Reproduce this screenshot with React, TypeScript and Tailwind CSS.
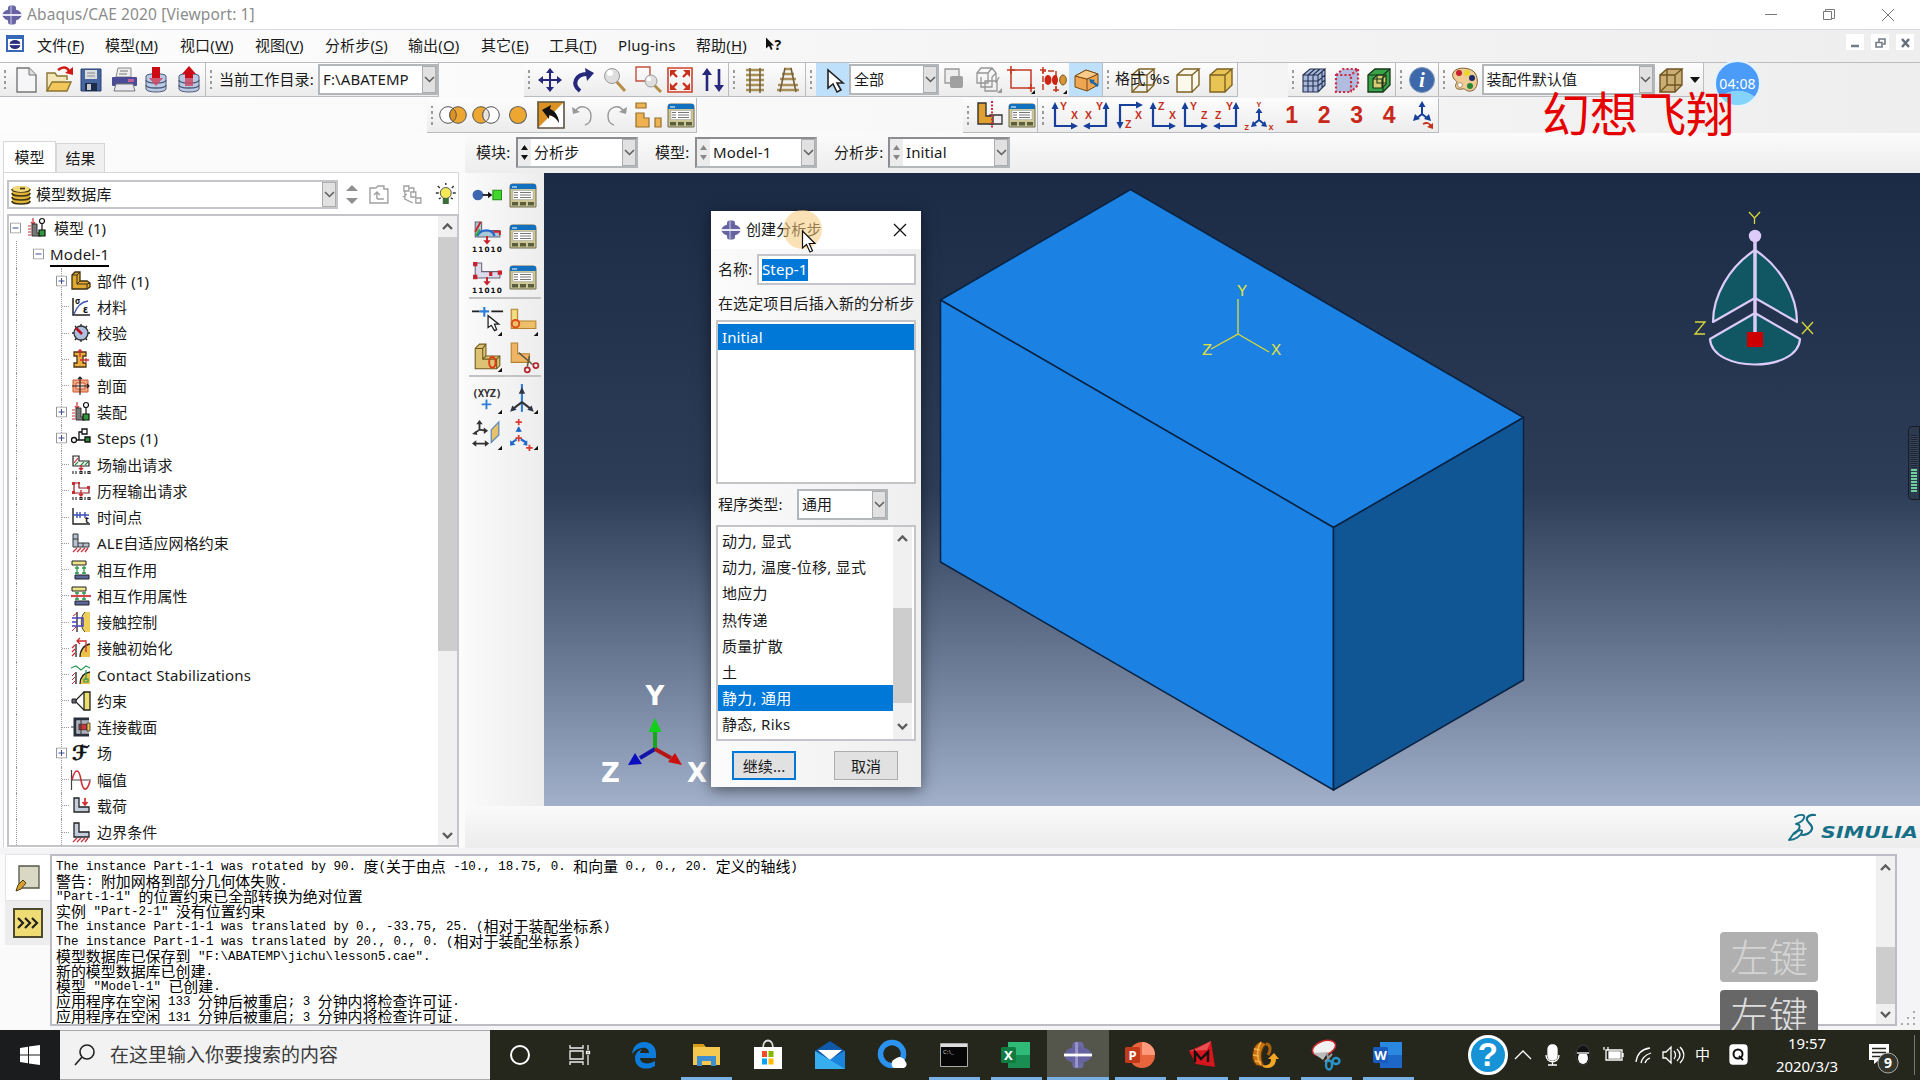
import type { ReactNode } from "react";
import clsx from "clsx";

/* ---------- small building blocks ---------- */

function Svg({ children, s = 28 }: { children: ReactNode; s?: number }) {
  return (
    <svg width={s} height={s} viewBox="0 0 28 28" fill="none" className="shrink-0 overflow-visible">
      {children}
    </svg>
  );
}

function Svg20({ children }: { children: ReactNode }) {
  return (
    <svg width="20" height="20" viewBox="0 0 20 20" fill="none" className="shrink-0 overflow-visible">
      {children}
    </svg>
  );
}

function Grip() {
  return (
    <div className="flex w-[10px] shrink-0 flex-col items-center gap-[3px]">
      {[0, 1, 2, 3].map((i) => (
        <i key={i} className="block h-[2.5px] w-[2.5px] bg-[#9a9a9a]" />
      ))}
    </div>
  );
}

function Cell({ children, on, className = "w-[32.5px]" }: { children?: ReactNode; on?: boolean; className?: string }) {
  return (
    <div className={clsx("relative flex h-full shrink-0 items-center justify-center", className, on && "bg-[#bfe0fa]")}>
      {children}
    </div>
  );
}

function Group({ children, className }: { children: ReactNode; className: string }) {
  return (
    <div
      className={clsx(
        "relative flex h-full shrink-0 items-center border-r border-b border-[#b9bcc0] bg-linear-to-b from-[#fdfdfd] to-[#ececec]",
        className
      )}
    >
      {children}
    </div>
  );
}

function Chevron({ up, bold }: { up?: boolean; bold?: boolean }) {
  return (
    <svg width="11" height="7" viewBox="0 0 11 7" fill="none">
      <path d={up ? "M1 6L5.5 1.5L10 6" : "M1 1L5.5 5.5L10 1"} stroke="#5c5c5c" strokeWidth={bold ? 2.4 : 1.5} />
    </svg>
  );
}

function Combo({ text, className, spin, dim }: { text: string; className: string; spin?: boolean; dim?: boolean }) {
  return (
    <div className={clsx("flex shrink-0 items-center border-2 border-[#b4b7ba] bg-white", className, spin && "border-t-[#8b8d90] border-l-[#8b8d90]")}>
      {spin && (
        <div className="flex h-full w-[13px] flex-col items-center justify-center gap-[5px] bg-[#ececec]">
          <svg width="7" height="5"><path d="M3.5 0L7 5H0Z" fill={dim ? "#888" : "#111"} /></svg>
          <svg width="7" height="5"><path d="M3.5 5L7 0H0Z" fill={dim ? "#888" : "#111"} /></svg>
        </div>
      )}
      <span className="-mt-[2px] flex-1 pl-[3px] leading-[22px] whitespace-nowrap">{text}</span>
      <div className="flex h-full w-[14px] items-center justify-center border border-[#adadad] bg-[#e1e1e1]">
        <Chevron />
      </div>
    </div>
  );
}

function AbaqusLogo({ s = 20, light }: { s?: number; light?: boolean }) {
  return (
    <svg width={s} height={s} viewBox="0 0 20 20" className="shrink-0">
      <rect x="6" y="0.5" width="8" height="19" rx="2.5" fill="#6c68a4" />
      <ellipse cx="10" cy="10" rx="9.6" ry="6" fill="#6763a0" />
      <rect x="8" y="1" width="2" height="18" fill="#9b98c8" />
      <rect x="0" y="9" width="20" height="2" fill={light ? "#fff" : "#e9e9f6"} />
    </svg>
  );
}

/* ---------- toolbar icons ---------- */

const DISK = "M4 10c0-3 20-3 20 0v13c0 4-20 4-20 0z";

const NewIcon = () => (
  <Svg>
    <path d="M5 2h12l7 7v17H5z" fill="#f6f6f8" stroke="#777" strokeWidth="1.4" />
    <path d="M17 2v7h7" fill="#ddd" stroke="#777" />
  </Svg>
);
const OpenIcon = () => (
  <Svg>
    <path d="M2 25V7h8l2 3h10v4" fill="#f3e7b8" stroke="#8a7431" strokeWidth="1.4" />
    <path d="M2 25l5-9h19l-4 9z" fill="#f3c659" stroke="#8a7431" strokeWidth="1.4" />
    <path d="M13 4c5-4 9-3 11 1" stroke="#d01c14" strokeWidth="2.6" />
    <path d="M28 1v8l-8-2z" fill="#d01c14" />
  </Svg>
);
const SaveIcon = () => (
  <Svg>
    <path d="M4 3h20v22H4z" fill="#46659f" stroke="#2b4273" />
    <path d="M8 4h12v9H8z" fill="#d9dde0" />
    <path d="M10 7h8M10 10h8" stroke="#888" />
    <path d="M8 17h12v8H8z" fill="#1d2c4a" />
    <path d="M10 18h4v6h-4z" fill="#c6cad0" />
  </Svg>
);
const PrintIcon = () => (
  <Svg>
    <path d="M8 2h13v9H6z" fill="#efefef" stroke="#888" />
    <path d="M10 5h8M9 8h8" stroke="#777" />
    <rect x="2" y="11" width="25" height="9" rx="1" fill="#4b4a96" />
    <path d="M18 13h6v3h-6z" fill="#c25e9a" />
    <path d="M6 18h17l2 7H4z" fill="#e8e8ee" stroke="#777" />
  </Svg>
);
const DbIcon = ({ up }: { up?: boolean }) => (
  <Svg>
    <path d={DISK} fill="#b9c8e4" stroke="#4d5a75" />
    <path d="M4 14c0 4 20 4 20 0M4 19c0 4 20 4 20 0" stroke="#4d5a75" strokeWidth="1.4" />
    {up ? <path d="M14 0l7 8h-3v4h-8V8H7z" fill="#cc0b14" /> : <path d="M10 1h8v11h-8z" fill="#cc0b14" />}
    {up ? <path d="M10 12h8v8h-8z" fill="#cf4a66" opacity=".85" /> : <path d="M7 12h14l-7 8z" fill="#cf4a66" opacity=".9" />}
  </Svg>
);
const PanIcon = () => (
  <Svg>
    <path d="M14 4v20M4 14h20" stroke="#27277c" strokeWidth="2" />
    <path d="M14 2l4 5h-8zM14 26l4-5h-8zM2 14l5-4v8zM26 14l-5-4v8z" fill="#27277c" />
  </Svg>
);
const RotateIcon = () => (
  <Svg>
    <path d="M11 25C2 18 7 8 18 8" stroke="#27277c" strokeWidth="4" />
    <path d="M16 2l9 5-7 8z" fill="#27277c" />
  </Svg>
);
const ZoomIcon = () => (
  <Svg>
    <path d="M15 15l9 10" stroke="#b58d45" strokeWidth="3" />
    <circle cx="11" cy="10" r="7.5" fill="#dedede" stroke="#9a9a9a" />
    <circle cx="9" cy="7" r="3" fill="#fff" />
  </Svg>
);
const BoxZoomIcon = () => (
  <Svg>
    <path d="M2 1h14v14H2z" stroke="#c4503f" strokeWidth="1.4" />
    <path d="M20 19l7 7" stroke="#b58d45" strokeWidth="3" />
    <circle cx="17" cy="15" r="6" fill="#dedede" stroke="#9a9a9a" />
    <circle cx="15" cy="13" r="2.3" fill="#fff" />
  </Svg>
);
const FitIcon = () => (
  <Svg>
    <path d="M2 2h24v24H2z" stroke="#d2402c" strokeWidth="1.6" />
    <path d="M6 6l5 5M22 6l-5 5M6 22l5-5M22 22l-5-5" stroke="#c8301c" strokeWidth="2.4" />
    <path d="M4 4h7l-7 7zM24 4h-7l7 7zM4 24h7l-7-7zM24 24h-7l7-7z" fill="#c8301c" />
  </Svg>
);
const SwapIcon = () => (
  <Svg>
    <path d="M8 6v19M20 3v19" stroke="#27277c" strokeWidth="2.6" />
    <path d="M8 2l5 7H3zM20 26l5-7H15z" fill="#27277c" />
  </Svg>
);
const RailIcon = ({ persp }: { persp?: boolean }) => (
  <Svg>
    <path
      d={persp ? "M10 3h8M8 8h12M6 13h16M4 19h20M3 24h22" : "M5 4h18M5 9h18M5 14h18M5 19h18M5 24h18"}
      stroke="#a89058"
      strokeWidth="2.4"
    />
    <path d={persp ? "M11 2L6 26M17 2l5 24" : "M9 2v25M19 2v25"} stroke="#75603a" strokeWidth="1.6" />
  </Svg>
);
const CursorIcon = () => (
  <Svg>
    <path d="M9 4v18l5-4 4 8 4-2-4-7h6z" fill="#fff" stroke="#222" strokeWidth="1.6" />
  </Svg>
);
const CubeWire = ({ stroke, fill = "none", solid }: { stroke: string; fill?: string; solid?: boolean }) => (
  <Svg>
    <path d="M3 9l7-6h15v16l-7 7H3z" fill={fill} />
    <path d="M3 9h15v17H3zM3 9l7-6h15l-7 6M25 3v16l-7 7" stroke={stroke} strokeWidth="1.4" />
    {!solid && <path d="M10 3v16h15M10 19l-7 7" stroke={stroke} strokeWidth="1.4" />}
  </Svg>
);
const GridCube = () => (
  <Svg>
    <path d="M3 9l7-6h15v16l-7 7H3z" fill="#a9b9de" />
    <path d="M3 9h15v17H3zM3 9l7-6h15l-7 6M25 3v16l-7 7M8 9v17M13 9v17M3 15h15l7-6M3 20h15l7-6M8 9l7-6M13 9l7-6M22 5v17" stroke="#26314f" strokeWidth="1.1" />
  </Svg>
);
const DotCube = () => (
  <Svg>
    <path d="M3 9l7-6h15v16l-7 7H3z" fill="#b0bde0" />
    <path d="M3 9h15v17H3zM3 9l7-6h15l-7 6M25 3v16l-7 7" stroke="#cc2f45" strokeWidth="2.2" strokeDasharray="2.2 2" />
  </Svg>
);
const GreenCube = () => (
  <Svg>
    <path d="M3 9l7-6h15v16l-7 7H3z" fill="#39a447" stroke="#17361c" strokeWidth="1.3" />
    <path d="M8 13l4-4h9v9l-4 4H8z" fill="#d7cc70" stroke="#17361c" strokeWidth="1.2" />
    <path d="M8 13h9v9M17 13l4-4M12 9v8h9M3 9h15v17M18 9l7-6" stroke="#17361c" strokeWidth="1.1" />
  </Svg>
);
const OrangeBox = () => (
  <Svg>
    <path d="M3 10l11-6 12 4v11l-11 6-12-4z" fill="#f0a552" stroke="#7b4b12" />
    <path d="M3 10l12 3 11-5M15 13v12" stroke="#7b4b12" />
    <path d="M3 10l11-6 12 4-11 5z" fill="#f9cb8a" stroke="#7b4b12" />
    <path d="M26 20l-7-5" stroke="#1568a8" strokeWidth="2.2" />
    <path d="M17 13l6 1-4 4z" fill="#1568a8" />
  </Svg>
);
const GreyCubes = () => (
  <Svg>
    <path d="M2 7l4-5h11l4 5v10M2 7h11v10H2zM13 7l4-5M6 11v10h11V11M17 11l4-4M10 15v10h12V15zM22 15l2-4" stroke="#969696" strokeWidth="1.3" />
    <path d="M27 27v-5l-5 5z" fill="#999" />
  </Svg>
);
const Corner = ({ c = "#111" }: { c?: string }) => <path d="M28 28v-4l-4 4z" fill={c} />;
const RectSel = () => (
  <Svg>
    <path d="M4 4h20v18H4z" stroke="#c43a24" strokeWidth="1.5" />
    <path d="M0 4h8M4 0v8M21 22h7M24 18v8" stroke="#c43a24" strokeWidth="1.6" />
    <Corner />
  </Svg>
);
const DotsSel = () => (
  <Svg>
    <path d="M4 24V5h13v20" stroke="#c43a24" strokeWidth="1.5" strokeDasharray="6 2" />
    <path d="M1 4h6M4 1v6M14 24h6M17 20v6" stroke="#c43a24" strokeWidth="1.5" />
    <ellipse cx="9" cy="14" rx="3.5" ry="5" fill="#cc2414" />
    <ellipse cx="16" cy="14" rx="3" ry="5" fill="#cc2414" />
    <ellipse cx="24" cy="14" rx="3.3" ry="5" fill="#d79634" stroke="#77531b" />
    <Corner />
  </Svg>
);
const GreySq = () => (
  <Svg>
    <path d="M5 3h14v14H5z" fill="#eee" stroke="#999" strokeWidth="1.3" />
    <rect x="10" y="10" width="13" height="12" rx="2" fill="#a0a0a0" />
  </Svg>
);
const InfoIcon = () => (
  <Svg>
    <circle cx="14" cy="14" r="12.5" fill="#3d68a9" stroke="#8197bb" />
    <text x="14" y="21" textAnchor="middle" fontSize="21" fontStyle="italic" fontWeight="700" fontFamily="Liberation Serif, serif" fill="#fff">i</text>
  </Svg>
);
const PaletteIcon = () => (
  <Svg>
    <path d="M2 7C5 0 20 1 24 7s3 17-4 18c-5 1-5-3-9-2s-8-1-6-5c2-3 0-3-2-5-1-1-2-4-1-6z" fill="#f0cb94" stroke="#7d6337" />
    <circle cx="8" cy="7" r="3" fill="#c8202c" />
    <circle cx="16" cy="7" r="3" fill="#e9d829" />
    <circle cx="21" cy="12" r="3" fill="#1c2a6c" />
    <circle cx="19" cy="20" r="3" fill="#278437" />
    <circle cx="9" cy="19" r="2.4" fill="#fff" stroke="#7d6337" strokeWidth=".6" />
  </Svg>
);
const Venn = ({ kind }: { kind: "right" | "left" | "one" }) => (
  <Svg>
    {kind === "one" ? (
      <circle cx="14" cy="14" r="8.5" fill="#eda62f" stroke="#666" strokeWidth="1.1" />
    ) : (
      <>
        <circle cx="9" cy="14" r="8.3" fill={kind === "left" ? "#eda62f" : "#fff"} stroke="#555" />
        <circle cx="19" cy="14" r="8.3" fill={kind === "left" ? "#fff" : "#eda62f"} stroke="#555" />
        <path d="M14 7.4a8.3 8.3 0 0 1 0 13.2a8.3 8.3 0 0 1 0-13.2z" fill={kind === "left" ? "#e9e4da" : "#dd9322"} stroke="#555" />
      </>
    )}
  </Svg>
);
const InvertIcon = () => (
  <Svg>
    <path d="M1 1h26v26H1z" fill="#fff" />
    <path d="M1 1h26L1 27z" fill="#dc9222" />
    <path d="M1 1h26v26H1z" stroke="#5b5341" strokeWidth="1.6" />
    <path d="M5 9l9-5-1 4c6 2 9 9 9 14-3-5-6-7-10-8v4z" fill="#111" />
  </Svg>
);
const UndoIcon = ({ flip }: { flip?: boolean }) => (
  <Svg>
    <g transform={flip ? "translate(28 0) scale(-1 1)" : undefined}>
      <path d="M7 9C12 3 22 6 22 15c0 4-2 8-6 9" stroke="#999" strokeWidth="1.4" />
      <path d="M3 6l1 7 7-2z" fill="#999" />
    </g>
  </Svg>
);
const PartsIcon = () => (
  <Svg>
    <path d="M2 2h10v5H2zM2 12h8v5h5v9H2zM21 17h6v9h-6z" fill="#efb252" stroke="#95712e" strokeWidth="1.2" />
  </Svg>
);
const ManagerIcon = () => (
  <Svg>
    <path d="M1 6c0-2 1-3 3-3h20c2 0 3 1 3 3v20H1z" fill="#cdc797" stroke="#6e6a4b" />
    <path d="M1 8V5c0-2 1-2 3-2h20c2 0 3 0 3 2v3z" fill="#1270bf" />
    <path d="M3 6h5" stroke="#fff" />
    <path d="M4 9.500h20v9H4z" fill="#fff" stroke="#999" strokeWidth=".5" />
    <path d="M5 11.500h4M11 11.500h11M5 14h4M11 14h11M5 16.500h4M11 16.500h11" stroke="#777" strokeWidth="1" />
    <path d="M3 21h6v3.500H3zM11 21h6v3.500h-6zM19 21h6v3.500h-6z" fill="#5b5d3f" />
  </Svg>
);
const SectionIcon = () => (
  <Svg>
    <path d="M15 14h12v9H15z" fill="#eee" stroke="#333" strokeWidth="1.3" />
    <path d="M3 2h8v13h7v8H3z" fill="#e0a030" stroke="#333" strokeWidth="1.4" />
    <path d="M17 0v28" stroke="#d22b40" strokeWidth="2" strokeDasharray="2 1.5" />
  </Svg>
);
const AxisText = ({ x, y, t }: { x: number; y: number; t: string }) => (
  <text x={x} y={y} fontSize="10.500" fontWeight="700" fontFamily="Liberation Sans, sans-serif" fill="#c5301c">{t}</text>
);
// corner 0 = bottom-left, 1 = bottom-right, 2 = top-left
const AxisIcon = ({ corner, v, h }: { corner: 0 | 1 | 2; v: string; h: string }) => (
  <Svg>
    {corner === 0 && (
      <>
        <path d="M5 6v19h17" stroke="#16409c" strokeWidth="2.2" />
        <path d="M5 1l3.500 7h-7zM28 25l-7-3.500v7z" fill="#16409c" />
        <AxisText x={10} y={9} t={v} />
        <AxisText x={21} y={18} t={h} />
      </>
    )}
    {corner === 1 && (
      <>
        <path d="M23 6v19H6" stroke="#16409c" strokeWidth="2.2" />
        <path d="M23 1l3.500 7h-7zM0 25l7-3.500v7z" fill="#16409c" />
        <AxisText x={13} y={9} t={v} />
        <AxisText x={2} y={18} t={h} />
      </>
    )}
    {corner === 2 && (
      <>
        <path d="M22 4H5v17" stroke="#16409c" strokeWidth="2.2" />
        <path d="M28 4l-7-3.500v7zM5 28l3.500-7h-7z" fill="#16409c" />
        <AxisText x={10} y={27} t={v} />
        <AxisText x={20} y={18} t={h} />
      </>
    )}
  </Svg>
);
const IsoIcon = () => (
  <Svg>
    <path d="M14 11v8l-5 4M14 19l5 4" stroke="#16409c" strokeWidth="2" />
    <path d="M14 7l3.500 5h-7zM6 26l2-6 4 5zM22 26l-2-6-4 5z" fill="#16409c" />
    <text x="11.500" y="5.500" fontSize="7.500" fontWeight="700" fill="#c5301c">Y</text>
    <text x="-0.500" y="28.500" fontSize="7.500" fontWeight="700" fill="#c5301c">Z</text>
    <text x="23.500" y="28.500" fontSize="7.500" fontWeight="700" fill="#c5301c">X</text>
  </Svg>
);
const IsoRotIcon = () => (
  <Svg>
    <path d="M14 4v9l-5 4M14 13l5 4" stroke="#16409c" strokeWidth="2" />
    <path d="M14 0l3.500 6h-7zM5 20l2-7 5 5zM23 20l-2-7-5 5z" fill="#16409c" />
    <path d="M15 23c4-2 7-1 8 3" stroke="#c5301c" strokeWidth="1.8" />
    <path d="M25 22v6l-6-2z" fill="#c5301c" />
  </Svg>
);

/* ---------- module toolbox icons ---------- */

const StepCreate = () => (
  <Svg s={30}>
    <circle cx="5.500" cy="14" r="5" fill="#3d66b0" />
    <path d="M10 14h7" stroke="#111" strokeWidth="1.6" />
    <path d="M19 14l-4-3v6z" fill="#111" />
    <path d="M19.500 9.500h8v9h-8z" fill="#3fd82b" stroke="#278b1c" />
  </Svg>
);
const OutputIcon = ({ hist }: { hist?: boolean }) => (
  <Svg s={30}>
    <path d="M3 1h6v8h17v6H3z" fill={hist ? "#dcdcec" : "#a9c8d8"} stroke="#667" />
    {hist ? (
      <path d="M1 0h4v4H1zM1 12h4v4H1zM24 8h4v4h-4zM16 9h3v4h-3z" fill="#c8202c" />
    ) : (
      <>
        <path d="M5 14c3-7 14-7 16 0" stroke="#2868d0" strokeWidth="2.200" />
        <path d="M3 10l5-9M20 10h6v3" stroke="#d0262a" strokeWidth="1.8" />
        <path d="M4 14l3-6" stroke="#26a54a" strokeWidth="2" />
      </>
    )}
    <path d="M14 14v6" stroke="#c8202c" strokeWidth="1.8" />
    <path d="M14 22l3.500-4h-7z" fill="#c8202c" />
    <text x="0" y="28.500" fontSize="6.800" fontWeight="700" textLength="28" fontFamily="DejaVu Sans, sans-serif" fill="#111">11010</text>
  </Svg>
);
const PickIcon = () => (
  <Svg s={30}>
    <path d="M0 5h7M18 5h11" stroke="#222" strokeWidth="1.6" />
    <path d="M7 5h9M11.500 1v9" stroke="#2f7fd8" strokeWidth="2" />
    <path d="M15 9v11l3-2 3 5 2-1-2-5h4z" fill="#fff" stroke="#222" strokeWidth="1.2" />
    <Corner />
  </Svg>
);
const LPart = () => (
  <Svg s={30}>
    <path d="M3 3h6v11h17v7H3z" fill="#ecc06a" stroke="#b7822e" />
    <path d="M4 4h4v9H4z" fill="#f0df85" />
    <circle cx="7" cy="16.500" r="3.500" stroke="#dd4d16" strokeWidth="1.8" />
    <Corner />
  </Svg>
);
const SolidL = () => (
  <Svg s={30}>
    <path d="M3 6l4-4h6v11h13v9l-3 3H3z" fill="#dcc274" stroke="#6f5a1c" />
    <path d="M3 6h7v10h13v9M10 6l3-4M10 16l3-3M23 16l3-3" stroke="#6f5a1c" />
    <ellipse cx="19" cy="19" rx="3" ry="5" stroke="#dd3a16" strokeWidth="1.8" />
    <Corner />
  </Svg>
);
const CutIcon = () => (
  <Svg s={30}>
    <path d="M3 1h6v10h11v8H3z" fill="#edb565" stroke="#b7822e" />
    <path d="M10 10l13 11M20 13l-2 10" stroke="#665a40" strokeWidth="1.5" />
    <circle cx="18" cy="26" r="2.400" stroke="#b3232b" strokeWidth="1.6" />
    <circle cx="26" cy="22" r="2.400" stroke="#b3232b" strokeWidth="1.6" />
  </Svg>
);
const XyzIcon = () => (
  <Svg s={30}>
    <text x="0" y="12" fontSize="10" fontWeight="700" textLength="28" fontFamily="DejaVu Sans Mono, monospace" fill="#333">(XYZ)</text>
    <path d="M9 19h9M13.500 14.500v9" stroke="#2f7fd8" strokeWidth="1.8" />
    <Corner />
  </Svg>
);
const CsysIcon = () => (
  <Svg s={30}>
    <path d="M13 0v26" stroke="#2f7fd8" strokeWidth="2" />
    <path d="M13 17l-8 6M13 17l8 6" stroke="#333" strokeWidth="2" />
    <path d="M13 3l3 6h-6zM2 26l2-6 4 4zM24 26l-2-6-4 4z" fill="#2c3644" />
    <Corner />
  </Svg>
);
const PlaneIcon = () => (
  <Svg s={30}>
    <path d="M7 2v7l-4 3M7 9l6 1M2 22h12" stroke="#333" strokeWidth="1.7" />
    <path d="M7 0l3 4H4zM0 22l4-3v6zM16 22l-4-3v6zM0 13l4-3 1 4zM15 10l-4 3v-6z" fill="#333" />
    <path d="M18 9l7-7v12l-7 7z" fill="#eac069" stroke="#5b8db8" strokeWidth="1.200" />
    <Corner />
  </Svg>
);
const DatumIcon = () => (
  <Svg s={30}>
    <path d="M7 2h6M10 -1v6M7 17h6M10 14v6M17 26h6M20 23v6" stroke="#dc3a2c" strokeWidth="1.6" />
    <path d="M10 7v4M8 18l-4 3M12 18l5 3" stroke="#1d68c8" strokeWidth="2" />
    <path d="M10 6l3 5H7zM2 24v-5l5 4zM18 24v-5l-4 4z" fill="#1d68c8" />
    <Corner />
  </Svg>
);

/* ---------- tree icons ---------- */

const Hatch = ({ y = 15 }: { y?: number }) => (
  <path d={`M2 ${y + 5}l4-4M6 ${y + 5}l4-4M10 ${y + 5}l4-4M14 ${y + 5}l3-4`} stroke="#c8303c" strokeWidth="1.300" />
);

const treeIcons: Record<string, ReactNode> = {
  model: (
    <Svg20>
      <path d="M6 0v7M4 4l2 3 2-3M1 8h3M1 11h3M1 14h3M1 17h3" stroke="#cf2a30" strokeWidth="1.2" />
      <path d="M5 6h5v9h4v3H5z" fill="#777" stroke="#333" />
      <circle cx="15" cy="3" r="2.500" fill="#fff" stroke="#111" strokeWidth="1.200" />
      <path d="M15 6v6M12 12h6v6h-6z" fill="#2f9a3a" stroke="#111" strokeWidth="1.200" />
    </Svg20>
  ),
  part: (
    <Svg20>
      <path d="M1 4l3-3h5v9h7l3 2v4l-3 2H1z" fill="#e0a934" stroke="#3d3010" strokeWidth="1.3" />
      <path d="M1 4h5v9h10v5M6 4l3-3M6 13l3-3M16 13l3-1" stroke="#3d3010" strokeWidth="1" />
    </Svg20>
  ),
  material: (
    <Svg20>
      <path d="M2 1v17h17" stroke="#222" strokeWidth="1.500" />
      <path d="M3 17C6 9 10 5 17 4" stroke="#3a52b4" strokeWidth="1.3" />
      <text x="4" y="7" fontSize="8" fontWeight="700" fill="#111">σ</text>
      <text x="12" y="16" fontSize="10" fontWeight="700" fill="#111">ε</text>
    </Svg20>
  ),
  calibration: (
    <Svg20>
      <path d="M10 1v18M1 10h18M4 3l12 14M16 3L4 17" stroke="#222" strokeWidth="1.3" />
      <circle cx="10" cy="10" r="7" fill="#aebfe0" stroke="#333" strokeWidth="1.3" />
      <path d="M5 5l6 6" stroke="#b8101c" strokeWidth="2.6" />
    </Svg20>
  ),
  section: (
    <Svg20>
      <path d="M3 3h12v4h-3v7h3v4H3v-4h3V7H3z" fill="#efae42" stroke="#4e3610" strokeWidth="1.3" />
      <path d="M9 0v8M9 11h9M7 2h4M15 9v4" stroke="#cf2a30" strokeWidth="1.300" />
    </Svg20>
  ),
  profile: (
    <Svg20>
      <path d="M2 4h15v12H2z" fill="#f3a884" stroke="#d0542c" />
      <path d="M5 7h9v6H5z" fill="#f9d6c4" stroke="#d0542c" />
      <path d="M9 1v18M1 10h17M7 3l2-2 2 2M16 8l2 2-2 2" stroke="#222" strokeWidth="1.200" />
    </Svg20>
  ),
  steps: (
    <Svg20>
      <circle cx="3" cy="12" r="2.500" stroke="#111" strokeWidth="1.300" />
      <path d="M6 12h8M8 12V4h3M11 1h5v5h-5z" stroke="#111" strokeWidth="1.300" />
      <path d="M14 9h5v5h-5z" fill="#2f8a3a" stroke="#111" strokeWidth="1.300" />
    </Svg20>
  ),
  field: (
    <Svg20>
      <path d="M2 1h6v5h10v5H2z" fill="#f7f7f7" stroke="#222" strokeWidth="1.200" />
      <path d="M3 8l4-5" stroke="#cf2a30" strokeWidth="1.200" />
      <path d="M4 10l3-3M10 10l3-3M14 10l3-3" stroke="#2a9440" strokeWidth="1.200" />
      <path d="M10 10v5M8 13l2 2 2-2" stroke="#cf2a30" strokeWidth="1.400" />
      <path d="M2 16v3M5 16v3M9 16.500h2v2H9zM14 16v3M17 16.500h2v2h-2z" stroke="#222" strokeWidth="1.100" />
    </Svg20>
  ),
  history: (
    <Svg20>
      <path d="M3 2h5v5h10v5H3z" fill="#f7f7f7" stroke="#8a1d24" strokeWidth="1.200" />
      <path d="M1 1h3v3H1zM1 10h3v3H1zM16 5h3v3h-3zM7 1h2v2H7z" fill="#cf2a30" />
      <path d="M10 9v6M8 13l2 2 2-2" stroke="#cf2a30" strokeWidth="1.400" />
      <path d="M2 16v3M5 16v3M9 16.500h2v2H9zM14 16v3M17 16.500h2v2h-2z" stroke="#222" strokeWidth="1.100" />
    </Svg20>
  ),
  time: (
    <Svg20>
      <path d="M2 1v16h17" stroke="#222" strokeWidth="1.400" />
      <path d="M2 8h16M6 5v6M9 5v6M14 5v6" stroke="#3a4fb4" strokeWidth="1.400" />
      <text x="14" y="16" fontSize="9" fontWeight="700" fill="#111">t</text>
    </Svg20>
  ),
  ale: (
    <Svg20>
      <path d="M2 1h5v9h11v4H2zM2 6h5M7 10v4M12 10v4" fill="#b5c2cf" stroke="#333" />
      <Hatch y={14} />
    </Svg20>
  ),
  inter: (
    <Svg20>
      <path d="M1 1h14v4H1z" fill="#efe387" stroke="#222" />
      <path d="M6 6v8M13 6v8M4 8h4M11 8h4M4 13h4M11 13h4" stroke="#2a9a48" strokeWidth="1.300" />
      <path d="M4 15h14v4H4z" fill="#5a679a" stroke="#222" />
    </Svg20>
  ),
  interProp: (
    <Svg20>
      <path d="M1 1h14v4H1z" fill="#efe387" stroke="#222" />
      <path d="M6 6v8M13 6v8M4 7h4M11 7h4M4 13h4M11 13h4" stroke="#2a9a48" strokeWidth="1.300" />
      <path d="M0 10h20" stroke="#d24650" strokeWidth="2.200" />
      <path d="M4 15h14v4H4z" fill="#5a679a" stroke="#222" />
    </Svg20>
  ),
  ctrl: (
    <Svg20>
      <path d="M19 0v20h-5c-5-4-5-16 0-20z" fill="#ecd05a" />
      <path d="M14 0c-5 4-5 16 0 20" stroke="#444" />
      <path d="M6 0v20" stroke="#222" strokeWidth="1.300" />
      <path d="M2 4l4-3M1 19l4-4" stroke="#cf2a30" />
      <path d="M1 6h11v8H1M12 6v8M1 10h5" stroke="#4a3fc0" strokeWidth="1.500" />
    </Svg20>
  ),
  init: (
    <Svg20>
      <path d="M19 6v13H9C9 12 13 7 19 6z" fill="#ecc34a" />
      <path d="M9 19c0-7 4-12 10-13M5 6v13" stroke="#222" strokeWidth="1.300" />
      <path d="M1 10l3-3M1 14l3-3M1 18l3-3M6 3h9v11M9 0L6 3l3 3" stroke="#cf2a30" strokeWidth="1.300" />
    </Svg20>
  ),
  stab: (
    <Svg20>
      <path d="M19 7v12H9C9 12 13 8 19 7z" fill="#ecc34a" />
      <path d="M9 19c0-7 4-11 10-12M5 7v12" stroke="#222" strokeWidth="1.300" />
      <path d="M1 11l3-3M1 15l3-3M1 19l3-3" stroke="#cf2a30" />
      <path d="M0 3l5-2 5 4 5-4 4 2M15 5v10M13 14h4v3h-4z" stroke="#2a9a58" strokeWidth="1.200" />
    </Svg20>
  ),
  constraint: (
    <Svg20>
      <path d="M13 1h6v18h-6z" fill="#eede6b" stroke="#222" strokeWidth="1.300" />
      <path d="M13 1L5 9v2l8 8" stroke="#222" strokeWidth="1.200" />
      <path d="M1 8h4v4H1z" fill="#667" stroke="#222" />
    </Svg20>
  ),
  conn: (
    <Svg20>
      <path d="M18 2H4v16h14" stroke="#2a2f3c" strokeWidth="3" />
      <path d="M18 5H7v10h11" stroke="#8c97ac" strokeWidth="1.500" />
      <path d="M8 7h8v6H8z" fill="#c8383c" stroke="#333" />
      <path d="M16 6h3v8h-3z" fill="#e9c34a" stroke="#333" strokeWidth=".8" />
      <path d="M0 10h4M10 1v18" stroke="#333" />
    </Svg20>
  ),
  func: (
    <Svg20>
      <text x="1" y="16.500" fontSize="20" fontWeight="700" fontFamily="DejaVu Serif, DejaVu Sans, serif" fill="#111" stroke="#111" strokeWidth=".5">ℱ</text>
    </Svg20>
  ),
  amp: (
    <Svg20>
      <path d="M0.500 0v20M0 10h20" stroke="#444" strokeWidth="1.200" />
      <path d="M1 10C4-2 8-2 10 10s6 12 9 1" stroke="#cc3038" strokeWidth="1.600" />
    </Svg20>
  ),
  load: (
    <Svg20>
      <path d="M3 2h5v9h10v5H3z" fill="#c3cddc" stroke="#222" strokeWidth="1.300" />
      <path d="M14 2v7M11.500 6l2.500 3 2.500-3" stroke="#cf2a30" strokeWidth="1.700" />
    </Svg20>
  ),
  bc: (
    <Svg20>
      <path d="M3 1h5v9h10v5H3z" fill="#c3cddc" stroke="#222" strokeWidth="1.300" />
      <Hatch />
    </Svg20>
  ),
};

const treeItems: { icon: string; label: string; open?: boolean }[] = [
  { icon: "part", label: "部件 (1)", open: true },
  { icon: "material", label: "材料" },
  { icon: "calibration", label: "校验" },
  { icon: "section", label: "截面" },
  { icon: "profile", label: "剖面" },
  { icon: "model", label: "装配", open: true },
  { icon: "steps", label: "Steps (1)", open: true },
  { icon: "field", label: "场输出请求" },
  { icon: "history", label: "历程输出请求" },
  { icon: "time", label: "时间点" },
  { icon: "ale", label: "ALE自适应网格约束" },
  { icon: "inter", label: "相互作用" },
  { icon: "interProp", label: "相互作用属性" },
  { icon: "ctrl", label: "接触控制" },
  { icon: "init", label: "接触初始化" },
  { icon: "stab", label: "Contact Stabilizations" },
  { icon: "constraint", label: "约束" },
  { icon: "conn", label: "连接截面" },
  { icon: "func", label: "场", open: true },
  { icon: "amp", label: "幅值" },
  { icon: "load", label: "载荷" },
  { icon: "bc", label: "边界条件" },
];

function Expander({ plus }: { plus?: boolean }) {
  return (
    <svg width="11" height="11" className="absolute top-1/2 -left-[6px] -translate-y-1/2">
      <path d="M.5.5h10v10H.5z" fill="#fff" stroke="#959595" />
      <path d={plus ? "M2.500 5.500h6M5.500 2.500v6" : "M2.500 5.500h6"} stroke="#3b4d94" />
    </svg>
  );
}

/* ---------- page sections ---------- */

const menus: [string, string, string][] = [
  ["文件", "F", "w-[68px]"],
  ["模型", "M", "w-[75px]"],
  ["视口", "W", "w-[75px]"],
  ["视图", "V", "w-[70px]"],
  ["分析步", "S", "w-[83px]"],
  ["输出", "O", "w-[73px]"],
  ["其它", "E", "w-[68px]"],
  ["工具", "T", "w-[69px]"],
  ["Plug-ins", "", "w-[78px]"],
  ["帮助", "H", "w-[69px]"],
];

function TitleBar() {
  return (
    <>
      <div className="flex h-[30px] items-center border-b border-[#d5dae0] bg-white pl-[2px] text-[15.5px] text-[#8c8c8c]">
        <AbaqusLogo />
        <span className="-mt-[2px] ml-[5px] flex-1">Abaqus/CAE 2020 [Viewport: 1]</span>
        <svg width="150" height="28" viewBox="0 0 150 28" fill="none" stroke="#777" className="mr-[12px]">
          <path d="M7 13.500h12M65.500 10.500h8v8h-8zM67.500 10.500v-2h9v9h-2.500M124 8l12 12M136 8l-12 12" />
        </svg>
      </div>
      <div className="flex h-[33px] items-center border-b border-[#b9bcc0] bg-linear-to-r from-[#fdfdfd] to-[#eeeeee] pl-[6px]">
        <svg width="18" height="17" viewBox="0 0 18 17" className="-mt-[5px]">
          <path d="M0 0h18v17H0z" fill="#3768b8" />
          <path d="M2 4h14v11H2z" fill="#fff" />
          <ellipse cx="9" cy="9.500" rx="5.500" ry="4.500" fill="#2b2c7c" />
          <path d="M3 9.500h12" stroke="#fff" strokeWidth="1.300" />
        </svg>
        <div className="-mt-[2px] ml-[13px] flex flex-1 text-[15px]">
          {menus.map(([label, key, w]) => (
            <span key={label} className={clsx("shrink-0 whitespace-nowrap", w)}>
              {label}
              {key && (
                <>
                  (<u className="underline-offset-2">{key}</u>)
                </>
              )}
            </span>
          ))}
          <svg width="20" height="22" viewBox="0 0 20 22">
            <path d="M1 3.500v11l3-2.500 2 4 1.500-.8L6 11.500h3z" fill="#111" />
            <text x="9.500" y="16" fontSize="14" fontWeight="700" fill="#111">?</text>
          </svg>
        </div>
        <div className="-mt-[8px] mr-[6px] flex gap-[7px]">
          <svg width="18" height="16" className="bg-white" fill="none"><path d="M5 12h8" stroke="#737b86" strokeWidth="2.500" /></svg>
          <svg width="18" height="16" className="bg-white" fill="none" stroke="#737b86" strokeWidth="1.600"><path d="M5 8.500h6v4.500H5zM8 8V5h6v5h-2" /></svg>
          <svg width="18" height="16" className="bg-white" fill="none"><path d="M6 5l7 8M13 5l-7 8" stroke="#66707c" strokeWidth="2.500" /></svg>
        </div>
      </div>
    </>
  );
}

function Toolbars() {
  return (
    <div className="bg-linear-to-r from-[#fcfcfc] via-[#f8f8f8] to-[#eeeeee]">
      <div className="flex h-[34px]">
        <Group className="w-[206px]">
          <Grip />
          <Cell><NewIcon /></Cell>
          <Cell><OpenIcon /></Cell>
          <Cell><SaveIcon /></Cell>
          <Cell><PrintIcon /></Cell>
          <Cell><DbIcon /></Cell>
          <Cell><DbIcon up /></Cell>
        </Group>
        <Group className="w-[233px]">
          <Grip />
          <span className="-mt-[2px] ml-[3px] w-[99px] whitespace-nowrap">当前工作目录:</span>
          <Combo text="F:\ABATEMP" className="h-[31px] w-[120px]" />
        </Group>
        <div className="w-[85px]" />
        <Group className="w-[205px]">
          <Grip />
          <Cell><PanIcon /></Cell>
          <Cell><RotateIcon /></Cell>
          <Cell><ZoomIcon /></Cell>
          <Cell><BoxZoomIcon /></Cell>
          <Cell><FitIcon /></Cell>
          <Cell><SwapIcon /></Cell>
        </Group>
        <Group className="w-[77px]">
          <Grip />
          <Cell><RailIcon /></Cell>
          <Cell><RailIcon persp /></Cell>
        </Group>
        <Group className="w-[297px]">
          <Grip />
          <Cell on className="w-[33px]"><CursorIcon /></Cell>
          <Combo text="全部" className="h-[31px] w-[90px]" />
          <Cell className="w-[30px]"><GreySq /></Cell>
          <div className="mr-[4px] h-[22px] w-px bg-[#aaa]" />
          <Cell className="w-[32px]"><GreyCubes /></Cell>
          <Cell className="w-[32px]"><RectSel /></Cell>
          <Cell className="w-[32px]"><DotsSel /></Cell>
          <Cell on className="w-[33px]"><OrangeBox /></Cell>
        </Group>
        <Group className="w-[135px]">
          <Grip />
          <Cell className="w-[59px]">
            <CubeWire stroke="#7d6123" />
            <span className="absolute top-[4px] left-[2px] tracking-[0.3px] whitespace-nowrap">格式 %s</span>
          </Cell>
          <Cell><CubeWire stroke="#7d6123" solid fill="#fbf8ec" /></Cell>
          <Cell><CubeWire stroke="#7d6123" solid fill="#e8c455" /></Cell>
        </Group>
        <div className="w-[50px]" />
        <Group className="w-[108px]">
          <Grip />
          <Cell><GridCube /></Cell>
          <Cell><DotCube /></Cell>
          <Cell><GreenCube /></Cell>
        </Group>
        <Group className="w-[43px]">
          <Grip />
          <Cell><InfoIcon /></Cell>
        </Group>
        <Group className="w-[265px]">
          <Grip />
          <Cell><PaletteIcon /></Cell>
          <Combo text="装配件默认值" className="h-[31px] w-[173px]" />
          <Cell><CubeWire stroke="#6f5423" fill="#c9ad72" /></Cell>
          <svg width="10" height="6" className="ml-[3px]"><path d="M0 0h10L5 6z" fill="#111" /></svg>
        </Group>
      </div>
      <div className="flex h-[36px] pt-px">
        <div className="w-[427px]" />
        <Group className="w-[270px]">
          <Grip />
          <Cell><Venn kind="right" /></Cell>
          <Cell><Venn kind="left" /></Cell>
          <Cell><Venn kind="one" /></Cell>
          <Cell><InvertIcon /></Cell>
          <Cell><UndoIcon /></Cell>
          <Cell><UndoIcon flip /></Cell>
          <Cell><PartsIcon /></Cell>
          <Cell><ManagerIcon /></Cell>
        </Group>
        <div className="w-[266px]" />
        <Group className="w-[75px]">
          <Grip />
          <Cell><SectionIcon /></Cell>
          <Cell><ManagerIcon /></Cell>
        </Group>
        <Group className="w-[401px]">
          <Grip />
          <Cell><AxisIcon corner={0} v="Y" h="X" /></Cell>
          <Cell><AxisIcon corner={1} v="Y" h="X" /></Cell>
          <Cell><AxisIcon corner={2} v="Z" h="X" /></Cell>
          <Cell><AxisIcon corner={0} v="Z" h="X" /></Cell>
          <Cell><AxisIcon corner={0} v="Y" h="Z" /></Cell>
          <Cell><AxisIcon corner={1} v="Y" h="Z" /></Cell>
          <Cell><IsoIcon /></Cell>
          {["1", "2", "3", "4"].map((n) => (
            <Cell key={n}>
              <b className="font-['Liberation_Sans',sans-serif] text-[23px] text-[#c8281a]">{n}</b>
            </Cell>
          ))}
          <Cell><IsoRotIcon /></Cell>
        </Group>
      </div>
    </div>
  );
}

function ModelTree() {
  return (
    <div className="flex w-[465px] shrink-0 flex-col bg-[#fbfbfb] pt-[8px] pl-[3px]">
      <div className="flex h-[31px] items-end">
        <div className="flex h-[31px] w-[53px] items-center justify-center border border-b-0 border-[#d5d8da] bg-white pb-px">模型</div>
        <div className="flex h-[29px] w-[49px] items-center justify-center border border-b-0 border-[#d5d8da] bg-[#f0f0f0]">结果</div>
      </div>
      <div className="flex w-[456px] flex-1 flex-col border-t border-r border-l border-[#d5d8da] bg-white pt-[7px] pl-[3px]">
        <div className="flex h-[29px] items-center">
          <div className="flex h-[29px] w-[332px] items-center border-2 border-[#c3c5c8] bg-white pl-[2px]">
            <svg width="20" height="20" viewBox="0 0 20 20" fill="none">
              <path d="M1 4c0-4 18-4 18 0v12c0 4-18 4-18 0z" fill="#dfb43a" />
              <path d="M1 4c0 4 18 4 18 0M1 8c0 4 18 4 18 0M1 12c0 4 18 4 18 0M1 16c0 4 18 4 18 0" stroke="#3d3212" strokeWidth="1.700" />
              <ellipse cx="10" cy="4" rx="8.500" ry="3" fill="#f2d878" />
              <path d="M9 3.500h5" stroke="#3d3212" strokeWidth="1.700" />
            </svg>
            <span className="-mt-[2px] ml-[5px] flex-1">模型数据库</span>
            <div className="flex h-full w-[14px] items-center justify-center border border-[#adadad] bg-[#e1e1e1]"><Chevron /></div>
          </div>
          <svg width="112" height="24" viewBox="0 0 112 24" fill="none" className="ml-[8px]">
            <path d="M6 8l6-6 6 6zM6 15l6 6 6-6z" transform="translate(-6 0)" fill="#8f8f8f" />
            <path d="M24 5h6l2-2h6v3h4v14H24zM31 16h7M31 16v-6M28 12l3-3 3 3" stroke="#a0a0a0" strokeWidth="1.400" />
            <path d="M58 3h5v5h-5zM65 9h5v5h-5zM70 15h5v5h-5zM63 5h5v4M59 8v8l8 4M57 14l4-3" stroke="#a0a0a0" strokeWidth="1.300" />
            <circle cx="100" cy="10" r="5.500" fill="#f3e957" stroke="#555" />
            <path d="M97 15h6v6h-6z" fill="#3b6a3b" />
            <path d="M100 0v2M92 3l2 2M108 3l-2 2M90 10h3M107 10h3M93 16l2-1M107 16l-2-1" stroke="#333" strokeWidth="1.400" />
          </svg>
        </div>
        <div className="mt-[5px] flex h-[633px] w-[452px] overflow-hidden border-2 border-[#c3c5c8]">
          <div className="-mt-px flex-1">
            <div className="flex h-[26.280px] pl-[7px]">
              <div className="relative flex w-[11px] items-center"><Expander /></div>
              <div className="flex items-center">
                {treeIcons.model}
                <span className="ml-[7px]">模型 (1)</span>
              </div>
            </div>
            <div className="flex h-[26.280px] pl-[7px]">
              <div className="w-[23px] border-l border-dotted border-[#999]" />
              <div className="relative flex w-[11px] items-center"><Expander /></div>
              <span className="mt-[2px] flex h-[24px] items-center border-b-2 border-black leading-none tracking-[0.25px]">Model-1</span>
            </div>
            {treeItems.map((t) => (
              <div key={t.label + t.icon} className="flex h-[26.280px] pl-[7px]">
                <div className="w-[45px] shrink-0 border-l border-dotted border-[#999]" />
                <div className="relative flex w-[10px] shrink-0 items-center border-l border-dotted border-[#999]">
                  {t.open ? <Expander plus /> : <i className="block w-[7px] border-t border-dotted border-[#999]" />}
                </div>
                <div className="flex items-center whitespace-nowrap">
                  {treeIcons[t.icon]}
                  <span className="ml-[6px]">{t.label}</span>
                </div>
              </div>
            ))}
          </div>
          <div className="flex w-[19px] flex-col items-center bg-[#f0f0f0]">
            <div className="flex h-[21px] items-center"><Chevron up bold /></div>
            <div className="h-[414px] w-full bg-[#cdcdcd]" />
            <div className="flex-1" />
            <div className="flex h-[20px] items-center"><Chevron bold /></div>
          </div>
        </div>
      </div>
    </div>
  );
}

function Toolbox() {
  return (
    <div className="flex w-[79px] shrink-0 flex-col items-center bg-linear-to-r from-[#fafafa] to-[#ededed] pt-[2px]">
      <div className="grid h-[122px] w-[72px] grid-cols-2 items-center justify-items-center">
        <StepCreate /><ManagerIcon />
        <OutputIcon /><ManagerIcon />
        <OutputIcon hist /><ManagerIcon />
      </div>
      <div className="h-[2px] w-[72px] bg-[#c3c3c3]" />
      <div className="grid h-[76px] w-[72px] grid-cols-2 items-center justify-items-center pt-[4px]">
        <PickIcon /><LPart />
        <SolidL /><CutIcon />
      </div>
      <div className="h-[2px] w-[72px] bg-[#c3c3c3]" />
      <div className="grid h-[76px] w-[72px] grid-cols-2 items-center justify-items-center pt-[4px]">
        <XyzIcon /><CsysIcon />
        <PlaneIcon /><DatumIcon />
      </div>
    </div>
  );
}

function Scene() {
  return (
    <svg width="1374" height="633" viewBox="544 173 1374 633" fill="none">
      <g stroke="#0a2342" strokeWidth="1.500" strokeLinejoin="round">
        <path d="M1130.500 189.500L940.500 300L1333.500 527.500L1523.500 417.500Z" fill="#1b81e2" />
        <path d="M940.500 300V562L1333.500 790V527.500Z" fill="#1b81e2" />
        <path d="M1333.500 527.500V790L1523.500 680V417.500Z" fill="#105594" />
      </g>
      <path d="M1238 299V334L1211 349M1238 334L1269 352" stroke="#d6d83c" strokeWidth="1.400" />
      <g fill="#e0e03c" fontFamily="Liberation Mono, monospace" fontSize="17">
        <text x="1237" y="296">Y</text>
        <text x="1202" y="355">Z</text>
        <text x="1271" y="355">X</text>
      </g>
      <g stroke="#dccbf8" strokeWidth="2.200" strokeLinejoin="round">
        <path d="M1755 250C1729 267 1713 296 1713 322L1755 298L1797 322C1797 296 1781 267 1755 250Z" fill="#115763" />
        <path d="M1755 313L1710 339C1712 373 1798 373 1800 339Z" fill="#115763" />
        <path d="M1755 240V332" strokeWidth="3.500" />
      </g>
      <circle cx="1755" cy="236" r="6.200" fill="#dccbf8" />
      <path d="M1747 332h16v15h-16z" fill="#cc0000" />
      <g stroke="#d8d83a" strokeWidth="1.300">
        <path d="M1749 212l5.500 6 5.500-6M1754.500 218v6M1695 322h10l-10 12h10M1802 322l11 12M1813 322l-11 12" />
      </g>
      <g strokeWidth="4">
        <path d="M655 749V730" stroke="#17a51c" />
        <path d="M655 749L640 758" stroke="#1414a8" />
        <path d="M655 749L671 758" stroke="#b81414" />
      </g>
      <path d="M655 718l6.500 14h-13z" fill="#12cf1c" />
      <path d="M628 765l7-12 7 11z" fill="#0c0cc0" />
      <path d="M682 765l-7-12-7 9z" fill="#cc1010" />
      <g fill="#fff" fontFamily="DejaVu Sans, sans-serif" fontWeight="700" fontSize="26" textAnchor="middle">
        <text x="655" y="705">Y</text>
        <text x="610.500" y="782">Z</text>
        <text x="697" y="782">X</text>
      </g>
    </svg>
  );
}

const procedures = ["动力, 显式", "动力, 温度-位移, 显式", "地应力", "热传递", "质量扩散", "土", "静力, 通用", "静态, Riks"];

function StepDialog() {
  return (
    <div className="absolute top-[38px] left-[167px] flex h-[576px] w-[210px] flex-col bg-linear-to-r from-[#fbfbfb] to-[#efefef] shadow-[0_3px_14px_rgba(0,0,0,0.5)]">
      <div className="flex h-[38px] items-center bg-white pl-[10px]">
        <AbaqusLogo />
        <span className="-mt-[2px] ml-[5px] flex-1">创建分析步</span>
        <svg width="14" height="14" className="mr-[14px]"><path d="M1 1l12 12M13 1L1 13" stroke="#111" strokeWidth="1.300" /></svg>
      </div>
      <div className="mt-[5px] flex h-[31px] items-center pl-[7px]">
        <span className="-mt-[2px] w-[39px] whitespace-nowrap">名称:</span>
        <div className="flex h-[31px] w-[159px] items-center border-2 border-[#c3c5c8] bg-white pl-[3px]">
          <span className="flex h-[22px] items-center bg-[#0078d7] pr-px pb-px text-white">Step-1</span>
        </div>
      </div>
      <div className="mt-[7px] h-[23px] pl-[7px] leading-[23px] whitespace-nowrap">在选定项目后插入新的分析步</div>
      <div className="mt-[5px] ml-[5px] h-[164px] w-[200px] border-2 border-[#c3c5c8] bg-white pt-[2px]">
        <div className="h-[26px] bg-[#0078d7] pl-[4px] leading-[26px] text-white">Initial</div>
      </div>
      <div className="mt-[5px] flex h-[31px] items-center pl-[7px]">
        <span className="-mt-[2px] w-[79px]">程序类型:</span>
        <Combo text="通用" className="h-[31px] w-[91px]" />
      </div>
      <div className="mt-[5px] ml-[5px] flex h-[216px] w-[200px] border-2 border-[#c3c5c8] bg-white">
        <div className="w-[175px] overflow-hidden pt-[1px] tracking-[0.28px]">
          {procedures.map((p) => (
            <div
              key={p}
              className={clsx("h-[26.200px] pl-[4px] leading-[26px] whitespace-nowrap", p === "静力, 通用" && "bg-[#0078d7] text-white")}
            >
              {p}
            </div>
          ))}
        </div>
        <div className="flex w-[19px] flex-col items-center bg-[#f0f0f0]">
          <div className="flex h-[81px] items-start pt-[8px]"><Chevron up bold /></div>
          <div className="h-[95px] w-full bg-[#cdcdcd]" />
          <div className="flex flex-1 items-center pt-[10px]"><Chevron bold /></div>
        </div>
      </div>
      <div className="mt-[10px] flex pl-[21px]">
        <div className="flex h-[29px] w-[64px] items-center justify-center border-2 border-[#0078d7] bg-[#e1e1e1]">继续...</div>
        <div className="ml-[38px] flex h-[29px] w-[64px] items-center justify-center border border-[#adadad] bg-[#e1e1e1]">取消</div>
      </div>
      <div className="absolute -top-px left-[72px] h-[39px] w-[39px] rounded-full bg-[#f6c87a]/55" />
      <svg width="17" height="24" viewBox="0 0 17 24" className="absolute top-[19px] left-[90px]">
        <path d="M1.500 1v17l4-3.500 3.500 7.500 2.500-1.200-3.300-7.300h5.800z" fill="#fff" stroke="#111" strokeWidth="1.200" />
      </svg>
    </div>
  );
}

function Simulia() {
  return (
    <svg width="134" height="34" viewBox="1784 812 134 34" fill="none" className="mt-[6px]">
      <g stroke="#156f86" strokeLinecap="round" strokeLinejoin="round" strokeWidth="1.900">
        <path d="M1793 817c4-3 11-3 9 1-1 3-5 5-8 6 6 0 4 6-2 10" />
        <path d="M1787 840c6 0 12-4 13-8 1-3-4-2-8 1l-5 7" />
        <path d="M1813 815c-5-1-9 2-8 5s6 5 5 9-6 6-10 6" strokeWidth="2.200" />
      </g>
      <text x="1819" y="838" fontSize="16.500" fontWeight="700" fontStyle="italic" fontFamily="DejaVu Sans, sans-serif" textLength="97" lengthAdjust="spacingAndGlyphs" fill="#156f86">
        SIMULIA
      </text>
    </svg>
  );
}

const messages = [
  "The instance Part-1-1 was rotated by 90. 度(关于由点 -10., 18.75, 0. 和向量 0., 0., 20. 定义的轴线)",
  "警告: 附加网格到部分几何体失败.",
  "\"Part-1-1\" 的位置约束已全部转换为绝对位置",
  "实例 \"Part-2-1\" 没有位置约束",
  "The instance Part-1-1 was translated by 0., -33.75, 25. (相对于装配坐标系)",
  "The instance Part-1-1 was translated by 20., 0., 0. (相对于装配坐标系)",
  "模型数据库已保存到 \"F:\\ABATEMP\\jichu\\lesson5.cae\".",
  "新的模型数据库已创建.",
  "模型 \"Model-1\" 已创建.",
  "应用程序在空闲 133 分钟后被重启; 3 分钟内将检查许可证.",
  "应用程序在空闲 131 分钟后被重启; 3 分钟内将检查许可证.",
];

function MessageArea() {
  return (
    <div className="relative flex h-[182px] overflow-hidden bg-[#f4f4f6] pt-[6px]">
      <div className="w-[50px] shrink-0 bg-[#fafafa] pl-[5px]">
        <div className="flex h-[47px] items-center justify-center border border-r-0 border-[#e3e3e3] bg-white">
          <svg width="26" height="28" viewBox="0 0 26 28">
            <path d="M4 2h20v22H4z" fill="#d9d8c4" stroke="#55554a" strokeWidth="1.300" />
            <path d="M1 27l2-6 5-5 3 3-5 6z" fill="#d7a02c" stroke="#4f3b10" />
          </svg>
        </div>
        <div className="flex h-[44px] items-center justify-center bg-[#ededed]">
          <div className="flex h-[30px] w-[30px] items-center justify-center border-2 border-[#4d4a2e] bg-[#efdc72]">
            <svg width="24" height="12" fill="none"><path d="M2 1l5 5-5 5M9 1l5 5-5 5M16 1l5 5-5 5" stroke="#222" strokeWidth="2.200" /></svg>
          </div>
        </div>
      </div>
      <div className="flex h-[172px] w-[1847px] border-2 border-[#bcbcc4] bg-white">
        <div className="flex-1 pt-[2px] pl-[4px] tracking-normal text-black">
          {messages.map((m) => (
            <div key={m} className="flex h-[15.050px] items-center whitespace-pre">
              {m.split(/([\u4e00-\u9fff]+)/).map((part, i) =>
                i % 2 ? (
                  <span key={i} className="-mt-px font-['Noto_Sans_CJK_SC',sans-serif] text-[14.95px] leading-[15px]">{part}</span>
                ) : (
                  <span key={i} className="pt-[4px] font-['Liberation_Mono',monospace] text-[12.5px] leading-[15px]">{part}</span>
                )
              )}
            </div>
          ))}
        </div>
        <div className="flex w-[19px] flex-col items-center bg-[#f0f0f0]">
          <div className="flex h-[91px] items-start pt-[8px]"><Chevron up bold /></div>
          <div className="h-[57px] w-full bg-[#cdcdcd]" />
          <div className="flex flex-1 items-center"><Chevron bold /></div>
        </div>
      </div>
      <svg width="20" height="18" className="mt-[156px] ml-[3px]">
        <path d="M13 1h2v2h-2zM7 7h2v2H7zM13 7h2v2h-2zM1 13h2v2H1zM7 13h2v2H7zM13 13h2v2h-2z" fill="#aaa" />
      </svg>
      <div className="absolute top-[84px] left-[1720px] flex h-[50px] w-[98px] items-center justify-center rounded-[4px] bg-[#b0b0b0] text-[39px] font-light text-[#d4d4d4]">左键</div>
      <div className="absolute top-[142px] left-[1720px] flex h-[50px] w-[98px] items-center justify-center rounded-[4px] bg-[#676767] text-[39px] font-light text-[#dedede]">左键</div>
    </div>
  );
}

/* ---------- taskbar ---------- */

const Office = ({ letter, dark, light, round }: { letter: string; dark: string; light: string; round?: boolean }) => (
  <svg width="32" height="32" viewBox="0 0 32 32">
    {round ? <circle cx="18" cy="16" r="13" fill={light} /> : <path d="M8 3h22v26H8z" fill={light} />}
    {round ? <path d="M18 3a13 13 0 0 1 13 13H18z" fill="#ff9b7c" /> : <path d="M8 16h22v13H8z" fill={dark} opacity=".7" />}
    <rect x="1" y="8" width="15" height="16" rx="1.500" fill={dark} />
    <text x="8.500" y="21" textAnchor="middle" fontSize="13" fontWeight="700" fill="#fff">{letter}</text>
  </svg>
);

const apps: { id: string; line?: boolean; icon: ReactNode }[] = [
  { id: "edge", icon: (
    <svg width="28" height="28" viewBox="0 0 28 28">
      <path d="M2 13C3 5 8 1 14 1c8 0 12 5 12 12v4H10c0 6 9 7 15 3v5c-8 5-20 3-20-8 0-5 4-8 7-9-1 1-2 3-2 4h9c0-7-11-7-17 1z" fill="#0c7bd9" />
    </svg>
  ) },
  { id: "files", line: true, icon: (
    <svg width="29" height="26" viewBox="0 0 29 26">
      <path d="M1 2h10l3 3h14v18H1z" fill="#f5c94f" />
      <path d="M1 2h10l2 3H1z" fill="#d99c19" />
      <path d="M5 24V14h19v10h-5v-5h-9v5z" fill="#3d8fd0" />
    </svg>
  ) },
  { id: "store", icon: (
    <svg width="30" height="32" viewBox="0 0 30 32" fill="none">
      <path d="M10 9c0-10 10-10 10 0" stroke="#ddd" strokeWidth="1.800" />
      <path d="M1 8h28v22H1z" fill="#fff" />
      <path d="M9 12h5v6H9z" fill="#f04e24" /><path d="M15.500 12h5v6h-5z" fill="#7fba00" />
      <path d="M9 19.500h5v6H9z" fill="#00a4ef" /><path d="M15.500 19.500h5v6h-5z" fill="#ffb900" />
    </svg>
  ) },
  { id: "mail", icon: (
    <svg width="32" height="30" viewBox="0 0 32 30">
      <path d="M1 11L16 1l15 10v17H1z" fill="#1058a8" />
      <path d="M4 10h24l-12 10z" fill="#fff" />
      <path d="M1 11l15 9L31 11v18H1z" fill="#36aef0" />
      <path d="M31 11v18L12 17.600l4 2.400z" fill="#1a84dc" />
    </svg>
  ) },
  { id: "browser", icon: (
    <svg width="32" height="32" viewBox="0 0 32 32" fill="none">
      <circle cx="16" cy="15" r="11.500" stroke="#2b93ef" strokeWidth="5.500" />
      <path d="M18 29a5 5 0 0 1 1-9 6 6 0 0 1 10 2 4 4 0 0 1-1 7z" fill="#fff" />
    </svg>
  ) },
  { id: "cmd", line: true, icon: (
    <svg width="28" height="24" viewBox="0 0 28 24">
      <path d="M.5.5h27v23H.5z" fill="#060606" stroke="#aaa" />
      <path d="M1 1h26v3H1z" fill="#ddd" />
      <text x="3" y="11" fontSize="6" fill="#ccc">C:\_</text>
    </svg>
  ) },
  { id: "excel", line: true, icon: <Office letter="X" dark="#107c41" light="#30ba78" /> },
  { id: "abaqus", line: true, icon: <AbaqusLogo s={28} light /> },
  { id: "ppt", line: true, icon: <Office letter="P" dark="#c13b1b" light="#e8643c" round /> },
  { id: "m", line: true, icon: (
    <svg width="30" height="30" viewBox="0 0 30 30" fill="none">
      <path d="M2 11L24 1l4 26-19-3z" fill="#d6151d" />
      <path d="M2 11l9-3 13-7-4 9z" fill="#f06a6c" opacity=".7" />
      <path d="M8 22V12l6 7 7-7v10" stroke="#111" strokeWidth="2.400" />
    </svg>
  ) },
  { id: "film", line: true, icon: (
    <svg width="30" height="30" viewBox="0 0 30 30" fill="none">
      <path d="M12 2C3 4 1 19 7 25l9 2C11 20 11 9 18 4z" fill="#c87412" stroke="#5a3508" strokeWidth="1.200" />
      <path d="M12 2c-4 6-5 16 0 23M5 9l6 1M4 15l6 1M6 21l6 1" stroke="#f3b04a" strokeWidth="1.500" />
      <path d="M17 4c5 0 5 7 2 11" stroke="#a8600e" strokeWidth="3" />
      <path d="M14 25c5 1 8-1 8-6h-3l6-6 5 6h-3c0 7-6 11-13 8z" fill="#f5a623" />
    </svg>
  ) },
  { id: "snip", line: true, icon: (
    <svg width="30" height="32" viewBox="0 0 30 32" fill="none">
      <ellipse cx="13" cy="9" rx="12" ry="7" transform="rotate(-20 13 9)" fill="#f2f2f2" stroke="#c8282c" strokeWidth="1.500" />
      <path d="M2 14l10 7 5-8z" fill="#bbb" />
      <path d="M16 14l2 9M21 15l-7 8" stroke="#999" strokeWidth="2" />
      <ellipse cx="18" cy="26" rx="3" ry="4.500" stroke="#2893c8" strokeWidth="2.400" />
      <ellipse cx="25" cy="22" rx="3.500" ry="3" stroke="#2893c8" strokeWidth="2.400" />
    </svg>
  ) },
  { id: "word", line: true, icon: <Office letter="W" dark="#185abd" light="#2b88e0" /> },
];

function Taskbar() {
  return (
    <div className="flex h-[50px] bg-[#25271c] text-white">
      <div className="flex w-[60px] items-center justify-center bg-[#1b1c1d]">
        <svg width="20" height="20" viewBox="0 0 20 20"><path d="M0 3l8-1.200v7.700H0zM9 1.600L20 0v9.500H9zM0 10.500h8v7.700L0 17zM9 10.500h11V20L9 18.400z" fill="#fff" /></svg>
      </div>
      <div className="flex w-[430px] items-center border-y border-[#aaa] bg-[#f2f2f3] text-[19px] tracking-normal text-[#3a3a3a]">
        <svg width="24" height="24" viewBox="0 0 24 24" fill="none" className="ml-[13px]">
          <circle cx="14" cy="9" r="7" stroke="#222" strokeWidth="1.600" />
          <path d="M9 14l-7 8" stroke="#222" strokeWidth="1.600" />
        </svg>
        <span className="ml-[13px]">在这里输入你要搜索的内容</span>
      </div>
      <div className="flex w-[60px] items-center justify-center">
        <i className="block h-[20px] w-[20px] rounded-full border-[2.500px] border-white" />
      </div>
      <div className="flex w-[59px] items-center justify-center">
        <svg width="22" height="20" viewBox="0 0 22 20" fill="none" stroke="#eee" strokeWidth="1.300">
          <path d="M1 0v3h13V0M1 6h13v8H1zM1 20v-3h13v3M19 0v5M19 10v10M17.500 6.500h3v2h-3z" />
        </svg>
      </div>
      <div className="ml-[4px] flex">
        {apps.map((a) => (
          <div key={a.id} className={clsx("flex w-[62px] flex-col items-center", a.id === "abaqus" && "bg-[#54564b]")}>
            <div className="flex h-[47px] items-center pt-[2px]">{a.icon}</div>
            {a.line && <div className={clsx("h-[3px] bg-[#76b0e4]", a.id === "abaqus" ? "w-full" : "w-[51px]")} />}
          </div>
        ))}
      </div>
      <div className="flex flex-1 items-center justify-end">
        <div className="flex h-[40px] w-[40px] items-center justify-center rounded-full border-[3px] border-white bg-[#1593d6] font-['Liberation_Sans',sans-serif] text-[33px] font-bold">?</div>
        <svg width="240" height="30" viewBox="1510 1040 240 30" fill="none" stroke="#fff" strokeWidth="1.300" className="ml-[2px]">
          <path d="M1515 1059l8-8 8 8" />
          <rect x="1548" y="1045" width="9" height="15" rx="4" fill="#fff" />
          <path d="M1546 1055c0 9 13 9 13 0M1552.500 1062v3M1548 1065h9" />
          <ellipse cx="1583" cy="1055" rx="7" ry="10" fill="#111" stroke="#333" />
          <ellipse cx="1583" cy="1058" rx="5" ry="6" fill="#fff" stroke="none" />
          <path d="M1577 1053h12" stroke="#aaa" strokeWidth="2" />
          <path d="M1606 1050h16v10h-16zM1623 1053v4M1604 1047v3M1608 1047v3" />
          <path d="M1609 1052h11v6h-11z" fill="#fff" />
          <path d="M1636 1062c1-8 6-13 14-14M1641 1063c1-5 4-8 10-10M1645 1063c1-3 2-4 5-5" />
          <path d="M1663 1052h3l5-5v16l-5-5h-3zM1674 1051c2 2 2 6 0 8M1677 1049c4 4 4 8 0 12M1680 1047c5 5 5 11 0 16" />
          <rect x="1730" y="1045" width="17" height="19" rx="3" fill="#fff" />
          <circle cx="1738" cy="1054" r="4.500" stroke="#111" strokeWidth="2" />
          <path d="M1739 1056l4 4" stroke="#111" strokeWidth="2" />
          <text x="1695" y="1060" fontSize="15" fill="#fff" stroke="none">中</text>
        </svg>
        <div className="w-[114px] text-center text-[15px] leading-[23px] tracking-[-0.1px]">
          <div>19:57</div>
          <div>2020/3/3</div>
        </div>
        <svg width="56" height="40" viewBox="1864 1036 56 40" fill="none">
          <path d="M1869 1045h20v16h-10l-5 4v-4h-5z" fill="#fff" />
          <path d="M1872 1049.500h14M1872 1053.500h14M1872 1057.500h14" stroke="#25271c" strokeWidth="1.300" />
          <circle cx="1888" cy="1064" r="10" fill="#33352c" stroke="#aaa" />
          <text x="1888" y="1069" textAnchor="middle" fontSize="14" fontWeight="700" fill="#fff">9</text>
          <path d="M1914.500 1036v40" stroke="#777" />
        </svg>
      </div>
    </div>
  );
}

export default function App() {
  return (
    <div className="relative h-[1080px] w-[1920px] overflow-hidden bg-[#f4f4f4] font-['Noto_Sans','Noto_Sans_CJK_SC',sans-serif] text-[15px] leading-[22px] tracking-[0.12px] text-[#1a1a1a]">
      <TitleBar />
      <Toolbars />
      <div className="flex h-[715px]">
        <ModelTree />
        <div className="flex flex-1 flex-col">
          <div className="flex h-[40px] items-center bg-linear-to-b from-[#fbfbfb] to-[#ededed] pb-px pl-[11px]">
            <span className="-mt-px w-[40px]">模块:</span>
            <Combo text="分析步" spin className="h-[31px] w-[122px]" />
            <span className="-mt-px ml-[17px] w-[40px]">模型:</span>
            <Combo text="Model-1" spin dim className="h-[31px] w-[122px]" />
            <span className="-mt-px ml-[17px] w-[54px]">分析步:</span>
            <Combo text="Initial" spin dim className="h-[31px] w-[122px]" />
          </div>
          <div className="flex h-[633px]">
            <Toolbox />
            <div className="relative flex-1 bg-linear-to-b from-[#1b2b45] from-0% via-[#2e3d57] via-50% to-[#a2b0ca] to-100%">
              <Scene />
              <StepDialog />
              <div className="absolute top-[253px] right-0 flex h-[74px] w-[12px] flex-col items-center justify-end rounded-l-[4px] border border-[#161c28] bg-[#2c3a50] pb-[7px]">
                <div className="h-[34px] w-[6px] bg-[repeating-linear-gradient(#1a2230_0_1px,#39465c_1px_2px)]" />
                <div className="h-[23px] w-[6px] bg-[repeating-linear-gradient(#6fd0a0_0_2px,#2c3a50_2px_3px)]" />
              </div>
            </div>
          </div>
          <div className="flex flex-1 items-start justify-end bg-linear-to-b from-[#fafafa] to-[#ececec]">
            <Simulia />
          </div>
        </div>
      </div>
      <MessageArea />
      <Taskbar />
      <div className="absolute top-[60px] left-[1714px] flex h-[47px] w-[47px] items-center justify-center rounded-full border-2 border-[#e4f3ff] bg-[radial-gradient(circle_at_50%_130%,#84d3fb_0_45%,#4b9cf8_46%)] text-[14px] text-white">
        04:08
      </div>
      <div className="absolute top-[88px] left-[1542px] font-['Liberation_Serif','Noto_Sans_CJK_SC',serif] text-[48px] leading-[56px] whitespace-nowrap text-[#e60000]">幻想飞翔</div>
    </div>
  );
}
